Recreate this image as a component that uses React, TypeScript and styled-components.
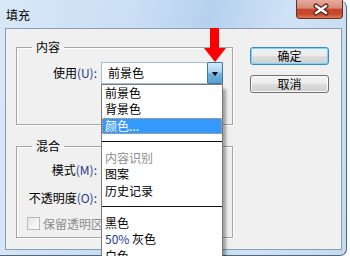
import styled, { createGlobalStyle } from 'styled-components'

const GlobalStyle = createGlobalStyle`
  html, body {
    margin: 0;
    padding: 0;
    overflow: hidden;
    background: #ffffff;
  }
  body {
    font-family: "Noto Sans CJK SC", "DejaVu Sans", sans-serif;
    font-size: 12px;
    color: #000;
  }
`

const fillItems = [
  { label: '前景色' },
  { label: '背景色' },
  { label: '颜色...', selected: true },
  { separator: true },
  { label: '内容识别', disabled: true },
  { label: '图案' },
  { label: '历史记录' },
  { separator: true },
  { label: '黑色' },
  { label: '50%', rest: ' 灰色' },
  { label: '白色' },
]

export default function App() {
  return (
    <>
      <GlobalStyle />
      <Window>
        <TitleBar>
          <Title>填充</Title>
          <CloseButton aria-label="关闭">
            <svg width="48" height="19" viewBox="0 0 48 19">
              <path d="M19 6 L29 13 M29 6 L19 13" stroke="#5b2216" strokeWidth="5" strokeLinecap="round" />
              <path d="M19 6 L29 13 M29 6 L19 13" stroke="#ffffff" strokeWidth="2.6" strokeLinecap="round" />
            </svg>
          </CloseButton>
        </TitleBar>

        <Client>
          <LeftColumn>
            <Group $height={85}>
              <Legend>内容</Legend>
              <Rows $top={8}>
                <Row>
                  <Label>
                    使用<Key>(U):</Key>
                  </Label>
                  <Combo>
                    <Field>前景色</Field>
                    <DropButton>
                      <Caret />
                    </DropButton>
                    <List>
                      {fillItems.map((item, i) =>
                        item.separator ? (
                          <Separator key={i} />
                        ) : (
                          <Item key={i} $selected={item.selected} $disabled={item.disabled}>
                            {item.rest ? <Key>{item.label}</Key> : item.label}
                            {item.rest}
                          </Item>
                        )
                      )}
                    </List>
                  </Combo>
                </Row>
              </Rows>
            </Group>

            <Group $height={99}>
              <Legend>混合</Legend>
              <Rows $top={6}>
                <Row>
                  <Label>
                    模式<Key>(M):</Key>
                  </Label>
                </Row>
                <Row>
                  <Label>
                    不透明度<Key>(O):</Key>
                  </Label>
                </Row>
                <CheckRow>
                  <CheckBox />
                  <CheckLabel>保留透明区域</CheckLabel>
                </CheckRow>
              </Rows>
            </Group>
          </LeftColumn>

          <ButtonColumn>
            <Button $primary>确定</Button>
            <Button>取消</Button>
          </ButtonColumn>
        </Client>

        <Arrow width="23" height="35" viewBox="0 0 23 35">
          <polygon points="6,0 15,0 15,20 22,20 11,34 0,20 6,20" fill="#ff0000" />
        </Arrow>
      </Window>
    </>
  )
}

const Window = styled.div`
  position: relative;
  width: 346px;
  height: 255px;
  display: flex;
  flex-direction: column;
  border-right: 1px solid #4f6784;
  border-bottom: 1px solid #4f6784;
  border-radius: 0 8px 7px 0;
  background: linear-gradient(
    100deg,
    #d7e8f8 0%,
    #cadef4 35%,
    #b6d1ee 55%,
    #d0e3f6 75%,
    #c4daf1 100%
  );
`

const TitleBar = styled.div`
  height: 28px;
  display: flex;
  justify-content: space-between;
  align-items: flex-start;
  padding-left: 6px;
`

const Title = styled.div`
  margin-top: 8px;
  line-height: 14px;
  font-size: 12px;
  color: #000;
`

const CloseButton = styled.div`
  width: 47px;
  height: 19px;
  margin-right: 3px;
  box-sizing: border-box;
  border: 1px solid #6d2d22;
  border-top: none;
  border-radius: 0 0 4px 4px;
  background: linear-gradient(
    180deg,
    #e6ab9e 0%,
    #d98a78 45%,
    #c4472c 52%,
    #c8492c 78%,
    #dc7a55 100%
  );
  svg {
    display: block;
  }
`

const Client = styled.div`
  flex: 1;
  margin: 0 4px 5px 5px;
  border: 1px solid #8a9db5;
  background: #f0f0f0;
  display: flex;
  align-items: flex-start;
  gap: 17px;
  padding: 11px 0 0 10px;
`

const LeftColumn = styled.div`
  display: flex;
  flex-direction: column;
  gap: 14px;
`

const Group = styled.fieldset<{ $height: number }>`
  margin: 0;
  padding: 0;
  width: 217px;
  height: ${({ $height }) => $height}px;
  box-sizing: border-box;
  border: 1px solid #a5a5a5;
  box-shadow: inset 1px 1px #ffffff, 1px 1px #ffffff;
  min-inline-size: 0;
`

const Legend = styled.legend`
  margin-left: 15px;
  padding: 0 4px;
  line-height: 14px;
  font-size: 12px;
`

const Rows = styled.div<{ $top: number }>`
  display: flex;
  flex-direction: column;
  gap: 6px;
  padding-top: ${({ $top }) => $top}px;
`

const Row = styled.div`
  display: flex;
  align-items: center;
  height: 22px;
  gap: 4px;
`

const Label = styled.div`
  width: 80px;
  text-align: right;
  line-height: 14px;
  white-space: nowrap;
`

const Key = styled.span`
  color: #1f3a8f;
`

const Combo = styled.div`
  position: relative;
  display: flex;
  width: 122px;
  height: 22px;
`

const Field = styled.div`
  flex: 1;
  box-sizing: border-box;
  border: 1px solid #a7bdd4;
  border-right: none;
  background: #ffffff;
  padding-left: 6px;
  line-height: 20px;
`

const DropButton = styled.div`
  width: 16px;
  box-sizing: border-box;
  border: 1px solid #3d78a8;
  border-radius: 1px;
  background: linear-gradient(180deg, #d4eaf9 0%, #a9d3f0 45%, #6eb0df 55%, #5a9fd2 100%);
  display: flex;
  align-items: center;
  justify-content: center;
`

const Caret = styled.div`
  width: 0;
  height: 0;
  border-left: 3.5px solid transparent;
  border-right: 3.5px solid transparent;
  border-top: 4px solid #000;
  margin-top: 2px;
`

const List = styled.div`
  position: absolute;
  top: 22px;
  left: 0;
  width: 122px;
  box-sizing: border-box;
  border: 1px solid #7a7a7a;
  background: #ffffff;
  box-shadow: 4px 4px 3px -1px rgba(0, 0, 0, 0.35);
  z-index: 5;
`

const Item = styled.div<{ $selected?: boolean; $disabled?: boolean }>`
  height: 16.25px;
  line-height: 16.25px;
  padding-left: 3px;
  white-space: nowrap;
  box-sizing: border-box;
  color: ${({ $selected, $disabled }) => ($selected ? '#ffffff' : $disabled ? '#8d8d8d' : '#000')};
  background: ${({ $selected }) => ($selected ? '#3399ff' : 'transparent')};
  outline: ${({ $selected }) => ($selected ? '1px dotted #f0a040' : 'none')};
  outline-offset: -1px;

  ${Key} {
    color: ${({ $selected }) => ($selected ? '#ffffff' : '#1f3a8f')};
  }
`

const Separator = styled.div`
  height: 16.25px;
  display: flex;
  align-items: center;
  &::after {
    content: '';
    flex: 1;
    height: 1px;
    background: #111;
  }
`

const CheckRow = styled.div`
  display: flex;
  align-items: center;
  gap: 3px;
  padding-left: 10px;
  margin-top: 2px;
  height: 13px;
`

const CheckBox = styled.div`
  width: 13px;
  height: 13px;
  box-sizing: border-box;
  border: 1px solid #b8b8b8;
  background: linear-gradient(135deg, #e4e4e4 0%, #f4f4f4 60%, #fcfcfc 100%);
`

const CheckLabel = styled.span`
  color: #8d8d8d;
  line-height: 14px;
  white-space: nowrap;
`

const ButtonColumn = styled.div`
  display: flex;
  flex-direction: column;
  gap: 10px;
  padding-top: 7px;
`

const Button = styled.div<{ $primary?: boolean }>`
  width: 79px;
  height: 18px;
  box-sizing: border-box;
  border: 1px solid ${({ $primary }) => ($primary ? '#2f8ed0' : '#707070')};
  border-radius: 3px;
  box-shadow: ${({ $primary }) => ($primary ? 'inset 0 0 0 1px #7fd4f5' : 'inset 0 0 0 1px #fbfbfb')};
  background: linear-gradient(180deg, #f3f3f3 0%, #ebebeb 50%, #dddddd 51%, #cfcfcf 100%);
  display: flex;
  align-items: center;
  justify-content: center;
  line-height: 14px;
  color: #000;
`

const Arrow = styled.svg`
  position: absolute;
  left: 204px;
  top: 28px;
  z-index: 10;
`
